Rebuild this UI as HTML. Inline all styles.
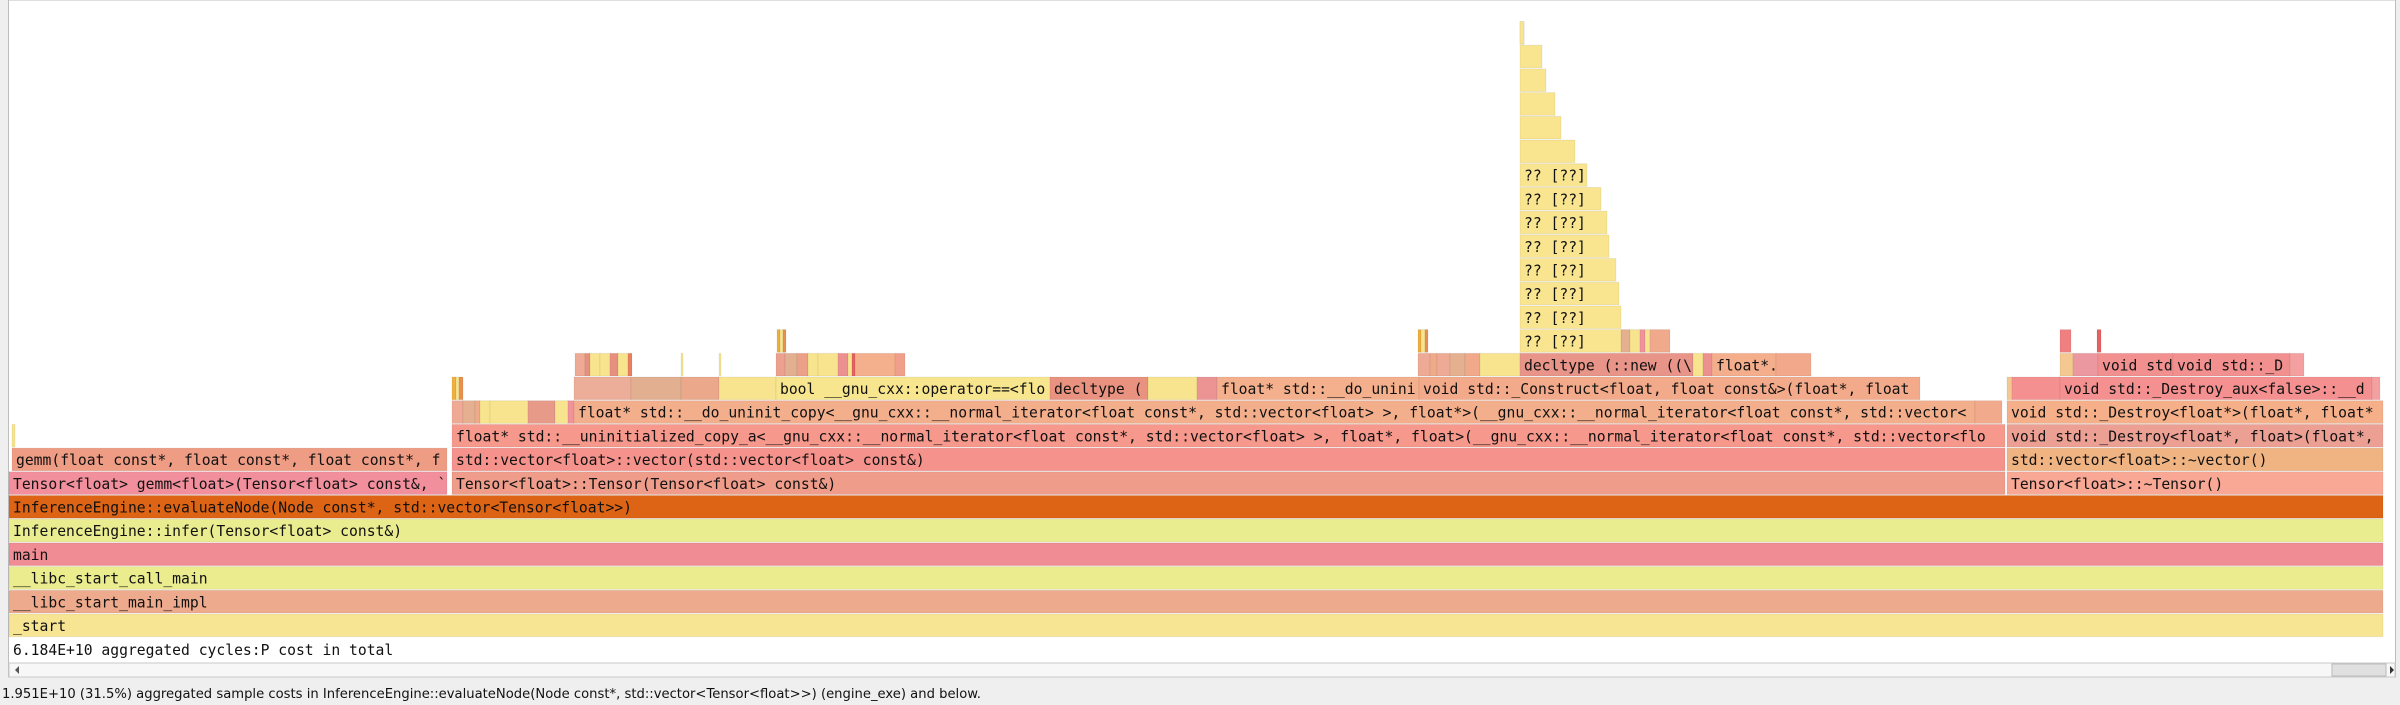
<!DOCTYPE html>
<html><head><meta charset="utf-8"><style>
html,body{margin:0;padding:0;width:2400px;height:705px;overflow:hidden;background:#efefef}
svg{display:block}
text{font-family:"DejaVu Sans Mono","Liberation Mono",monospace;font-size:14.7px;fill:#111}
.s{font-family:"DejaVu Sans","Liberation Sans",sans-serif;font-size:13.5px}
</style></head><body>
<svg width="2400" height="705" xmlns="http://www.w3.org/2000/svg">
<rect x="0" y="0" width="2400" height="705" fill="#efefef"/>
<rect x="8.5" y="0" width="2387" height="677" fill="#fff" stroke="#bdbdbd"/>
<g id="f"></g>
<script>
var P=23.7,B=614,H=22.7;
function r(k,x1,x2,c,t){var y=B-k*P;document.write('');var g=document.getElementById('f');
var R=document.createElementNS('http://www.w3.org/2000/svg','rect');R.setAttribute('x',x1);R.setAttribute('y',y);R.setAttribute('width',x2-x1);R.setAttribute('height',H);R.setAttribute('fill',c);R.setAttribute('stroke','rgba(0,0,0,0.06)');R.setAttribute('stroke-width','1');g.appendChild(R);
if(t){var T=document.createElementNS('http://www.w3.org/2000/svg','text');T.setAttribute('x',x1+4);T.setAttribute('y',y+17);T.textContent=t;g.appendChild(T);}}
</script>
</svg>
<script>
var Y='#f8e48e',S='#f0a98a',PK='#f2929a';
r(0,9,2383,'#f8e593','_start');
r(1,9,2383,'#eeaa8c','__libc_start_main_impl');
r(2,9,2383,'#eaec8e','__libc_start_call_main');
r(3,9,2383,'#f08c94','main');
r(4,9,2383,'#eaec90','InferenceEngine::infer(Tensor<float> const&)');
r(5,9,2383,'#dc6414','InferenceEngine::evaluateNode(Node const*, std::vector<Tensor<float>>)');
r(6,9,447,'#f28f9c','Tensor<float> gemm<float>(Tensor<float> const&, `');
r(6,452,2005,'#ef9c8a','Tensor<float>::Tensor(Tensor<float> const&)');
r(6,2007,2383,'#f8a894','Tensor<float>::~Tensor()');
r(7,12,447,'#ef9c84','gemm(float const*, float const*, float const*, f');
r(7,452,2005,'#f6928c','std::vector<float>::vector(std::vector<float> const&)');
r(7,2007,2383,'#f0b482','std::vector<float>::~vector()');
r(8,12,15,Y);
r(8,452,2005,'#f6988c','float* std::__uninitialized_copy_a<__gnu_cxx::__normal_iterator<float const*, std::vector<float> >, float*, float>(__gnu_cxx::__normal_iterator<float const*, std::vector<flo');
r(8,2007,2383,'#eca094','void std::_Destroy<float*, float>(float*,');
r(9,452,463,'#eeaa94');r(9,463,475,'#e4b090');r(9,475,480,S);r(9,480,490,Y);r(9,490,528,Y);r(9,528,555,'#e89a88');r(9,555,568,Y);r(9,568,574,PK);
r(9,574,1975,'#f3ae8c','float* std::__do_uninit_copy<__gnu_cxx::__normal_iterator<float const*, std::vector<float> >, float*>(__gnu_cxx::__normal_iterator<float const*, std::vector<');
r(9,1975,2002,'#f2aa8c');
r(9,2007,2383,'#f5b08a','void std::_Destroy<float*>(float*, float*');
r(10,452,456,'#f0b040');r(10,456,459,Y);r(10,459,463,'#e89050');
r(10,574,631,'#ecae98');r(10,631,681,'#e2b090');r(10,681,719,'#eca88a');r(10,719,776,Y);
r(10,776,1050,'#f8e68e','bool __gnu_cxx::operator==<flo');r(10,1050,1148,'#e8927f','decltype (');r(10,1148,1197,Y);r(10,1197,1217,'#ec9494');
r(10,1217,1419,'#f4b08c','float* std::__do_unini');r(10,1419,1920,'#f2aa8a','void std::_Construct<float, float const&>(float*, float');
r(10,2007,2012,'#f4c890');r(10,2012,2060,'#f49090');r(10,2060,2372,'#f49090','void std::_Destroy_aux<false>::__d');r(10,2372,2380,'#f4a0a0');
r(11,575,585,'#eeaa94');r(11,585,590,'#e89080');r(11,590,600,Y);r(11,600,610,Y);r(11,610,618,'#e89080');r(11,618,628,Y);r(11,628,632,'#e88060');
r(11,681,683,Y);r(11,719,721,Y);
r(11,776,785,'#eca090');r(11,785,797,'#e2b090');r(11,797,808,'#eca088');r(11,808,818,Y);r(11,818,838,Y);r(11,838,848,'#ec9090');r(11,848,852,Y);r(11,852,855,'#e86060');r(11,855,895,'#f4b08c');r(11,895,905,'#f0a08a');
r(11,1418,1430,'#eeaa94');r(11,1430,1437,S);r(11,1437,1450,'#eeaa94');r(11,1450,1465,'#e4b090');r(11,1465,1480,S);r(11,1480,1520,Y);
r(11,1520,1693,'#e89488','decltype (::new ((\\');r(11,1693,1703,Y);r(11,1703,1712,'#ec9090');r(11,1712,1776,'#f4ae8c','float*.');r(11,1776,1811,'#f2a88a');
r(11,2060,2073,'#f4c890');r(11,2073,2098,'#ec98a0');r(11,2098,2173,'#f29090','void std');r(11,2173,2290,'#f29090','void std::_D');r(11,2290,2304,'#f4a0a0');
r(12,777,780,'#f0b040');r(12,780,783,Y);r(12,783,786,'#e89050');
r(12,1418,1421,'#f0b040');r(12,1421,1425,Y);r(12,1425,1428,'#e89050');
r(12,1621,1630,'#e4b090');r(12,1630,1640,Y);r(12,1640,1645,PK);r(12,1645,1650,Y);r(12,1650,1670,S);
r(12,2060,2071,'#f08080');r(12,2097,2101,'#e86060');
var w=[1621,1621,1619,1616,1609,1607,1601,1587,1575,1561,1555,1546,1542,1524];
for(var i=0;i<w.length;i++){r(12+i,1520,w[i],'#f9e58f',i<8?'?? [??]':'');}
r(25,1520,1524,'#f9e58f');
var g=document.getElementById('f'),N='http://www.w3.org/2000/svg';
function el(n,a,t){var e=document.createElementNS(N,n);for(var k in a)e.setAttribute(k,a[k]);if(t)e.textContent=t;g.appendChild(e);}
el('text',{x:13,y:655},'6.184E+10 aggregated cycles:P cost in total');
el('rect',{x:9,y:663,width:2386,height:14,fill:'#f7f7f7',stroke:'#c8c8c8'});
el('rect',{x:2332,y:664,width:54,height:12,fill:'#e0e0e0',stroke:'#bbb'});
el('path',{d:'M19 666 L15 670 L19 674 Z',fill:'#555'});
el('path',{d:'M2390 666 L2394 670 L2390 674 Z',fill:'#333'});
el('text',{x:2,y:698,'class':'s',textLength:979,lengthAdjust:'spacingAndGlyphs'},'1.951E+10 (31.5%) aggregated sample costs in InferenceEngine::evaluateNode(Node const*, std::vector<Tensor<float>>) (engine_exe) and below.');
</script>
</body></html>
